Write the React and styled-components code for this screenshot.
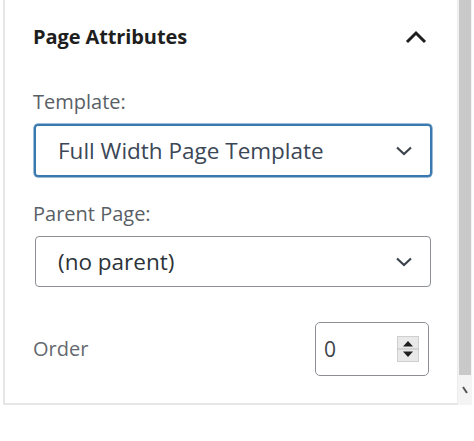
import React from "react";
import styled, { createGlobalStyle } from "styled-components";

const Global = createGlobalStyle`
  html, body { margin: 0; padding: 0; background: #ffffff; }
  body { font-family: "Open Sans", "Noto Sans", sans-serif; }
  * { box-sizing: border-box; }
`;

const Frame = styled.div`
  width: 474px;
  height: 441px;
  display: flex;
  align-items: flex-start;
  padding-left: 3px;
`;

const Panel = styled.section`
  width: 454px;
  height: 405px;
  border-left: 2px solid #e6e6e6;
  border-bottom: 2px solid #e6e6e6;
  background: #ffffff;
  display: flex;
  flex-direction: column;
  padding: 0 26px 0 28px;
`;

const Scrollbar = styled.div`
  width: 15px;
  height: 405px;
  display: flex;
  flex-direction: column;
  border-left: 1px solid #ececec;
  background: #f4f4f4;
`;

const Thumb = styled.div`
  height: 375px;
  background: #c9c9c9;
  margin: 0 1px 0 1px;
`;

const ArrowSlot = styled.div`
  flex: 1;
  display: flex;
  align-items: flex-start;
  justify-content: center;
  padding-top: 11px;
`;

const Header = styled.div`
  height: 74px;
  display: flex;
  align-items: center;
  justify-content: space-between;
`;

const Title = styled.h2`
  margin: 0;
  font-size: 20px;
  line-height: 24px;
  font-weight: 700;
  color: #1e1e1e;
  letter-spacing: -0.1px;
`;

const Toggle = styled.button`
  border: 0;
  background: transparent;
  padding: 0;
  width: 24px;
  height: 24px;
  display: flex;
  align-items: center;
  justify-content: center;
  margin-right: 3px;
`;

const Label = styled.div`
  font-size: 20px;
  color: ${(p) => p.$color || "#5a5f66"};
  line-height: 24px;
  margin-top: ${(p) => p.$mt || 0}px;
`;

const Select = styled.div`
  margin-top: ${(p) => p.$mt || 0}px;
  width: ${(p) => (p.$focus ? 398 : 396)}px;
  margin-left: ${(p) => (p.$focus ? 1 : 2)}px;
  height: ${(p) => (p.$focus ? 53 : 51)}px;
  border: ${(p) => (p.$focus ? "2px solid #3a79ad" : "1px solid #8c8f94")};
  border-radius: 4px;
  display: flex;
  align-items: center;
  justify-content: space-between;
  padding: 0 17px 0 22px;
  font-size: 22.5px;
  color: ${(p) => (p.$focus ? "#3b4756" : "#2c3338")};
  box-shadow: ${(p) => (p.$focus ? "0 0 0 0.5px #3a79ad" : "none")};
`;

const OrderRow = styled.div`
  margin-top: 35px;
  display: flex;
  align-items: center;
  justify-content: space-between;
  padding-right: 2px;
`;

const NumberBox = styled.div`
  width: 114px;
  height: 54px;
  border: 1px solid #8c8f94;
  border-radius: 5px;
  display: flex;
  align-items: center;
  justify-content: space-between;
  padding: 0 9px 0 8px;
  font-size: 21px;
  color: #3c434a;
`;

const ChevronDown = () => (
  <svg width="18" height="12" viewBox="0 0 18 12">
    <path d="M2 2.5 L9 9 L16 2.5" fill="none" stroke="#3c434a" strokeWidth="2.2" />
  </svg>
);

const ChevronUp = () => (
  <svg width="22" height="14" viewBox="0 0 22 14">
    <path d="M2 12 L11 3 L20 12" fill="none" stroke="#1e1e1e" strokeWidth="3" />
  </svg>
);

const Spinner = () => (
  <svg width="22" height="26" viewBox="0 0 22 26">
    <rect x="0.5" y="0.5" width="21" height="25" fill="#e9e9e9" stroke="#cfcfcf" />
    <line x1="0.5" y1="13" x2="21.5" y2="13" stroke="#bdbdbd" />
    <polygon points="11,5 16,10.5 6,10.5" fill="#1e1e1e" />
    <polygon points="11,21 16,15.5 6,15.5" fill="#1e1e1e" />
  </svg>
);

const ScrollArrow = () => (
  <svg width="6" height="8" viewBox="0 0 6 8">
    <path d="M1 1 L5 7" stroke="#555" strokeWidth="2" />
  </svg>
);

export default function App() {
  return (
    <>
      <Global />
      <Frame>
        <Panel>
          <Header>
            <Title>Page Attributes</Title>
            <Toggle aria-label="Collapse">
              <ChevronUp />
            </Toggle>
          </Header>
          <Label $mt={16}>Template:</Label>
          <Select $focus $mt={10}>
            <span>Full Width Page Template</span>
            <ChevronDown />
          </Select>
          <Label $mt={25}>Parent Page:</Label>
          <Select $mt={10}>
            <span>(no parent)</span>
            <ChevronDown />
          </Select>
          <OrderRow>
            <Label $color="#646970">Order</Label>
            <NumberBox>
              <span>0</span>
              <Spinner />
            </NumberBox>
          </OrderRow>
        </Panel>
        <Scrollbar>
          <Thumb />
          <ArrowSlot>
            <ScrollArrow />
          </ArrowSlot>
        </Scrollbar>
      </Frame>
    </>
  );
}
